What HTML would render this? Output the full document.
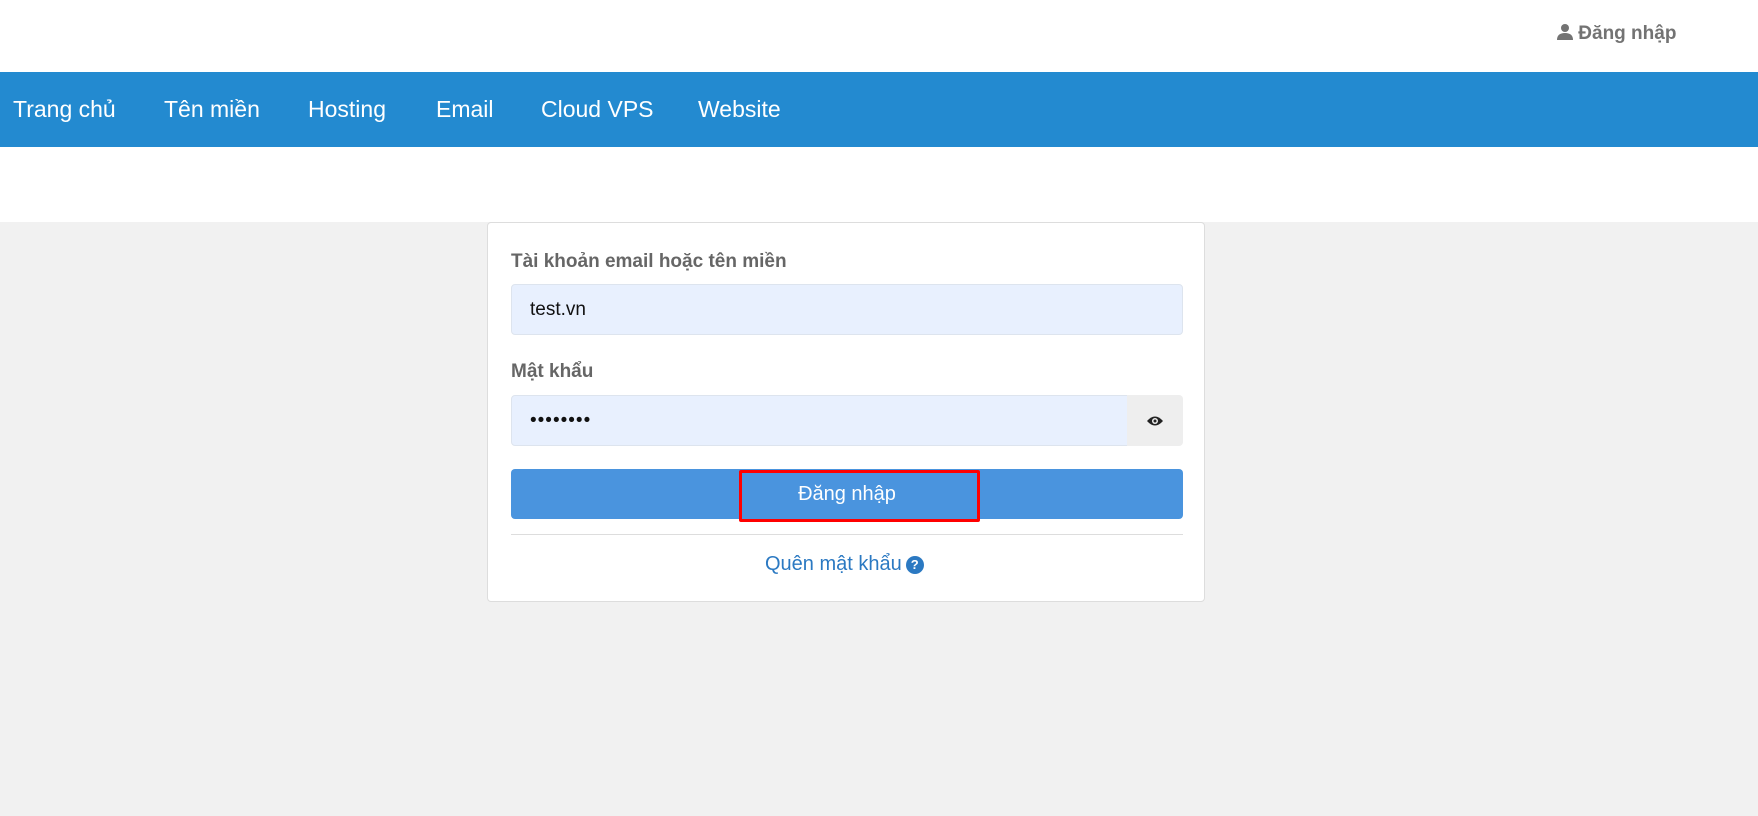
<!DOCTYPE html>
<html><head><meta charset="utf-8"><style>
*{box-sizing:border-box;margin:0;padding:0}
body{width:1758px;height:816px;background:#f1f1f1;font-family:"Liberation Sans",sans-serif;position:relative;overflow:hidden}
.top{position:absolute;left:0;top:0;width:1758px;height:222px;background:#fff}
.nav{position:absolute;left:0;top:72px;width:1758px;height:75px;background:#238ad0}
.nav span{position:absolute;top:24px;color:#fff;font-size:23px}
.login{position:absolute;left:1557px;top:23px;color:#737373;font-weight:bold;font-size:19px}
.card{position:absolute;left:487px;top:222px;width:718px;height:380px;background:#fff;border:1px solid #ddd;border-radius:4px}
.lbl{position:absolute;left:23px;color:#666;font-weight:bold;font-size:19px}
.inp{position:absolute;left:23px;width:672px;height:51px;background:#e8f0fe;border:1px solid #dde4ee;border-radius:4px;font-size:19px;padding:14px 18px;color:#111}
.eye{position:absolute;left:639px;top:172px;width:56px;height:51px;background:#eee;border-radius:0 4px 4px 0}
.btn{position:absolute;left:23px;top:246px;width:672px;height:50px;background:#4a94de;border-radius:4px;color:#fff;font-size:20px;text-align:center;line-height:50px}
.red{position:absolute;left:251px;top:247px;width:241px;height:52px;border:3px solid #f00;border-radius:2px}
.hr{position:absolute;left:23px;top:311px;width:672px;height:1px;background:#ddd}
.link{position:absolute;left:277px;top:330px;color:#2b79c2;font-size:20px}
.q{display:inline-block;width:18px;height:18px;border-radius:50%;background:#2b79c2;color:#fff;font-size:13px;font-weight:bold;text-align:center;line-height:18px;vertical-align:1px;margin-left:4px}
</style></head><body>
<div class="top"></div>
<div class="login"><svg width="16" height="17" viewBox="0 0 16 17" style="vertical-align:-1px"><circle cx="8" cy="5" r="4" fill="#737373"/><path d="M0 17 Q0 10 8 10 Q16 10 16 17Z" fill="#737373"/></svg> Đăng nhập</div>
<div class="nav">
<span style="left:13px">Trang chủ</span><span style="left:164px">Tên miền</span><span style="left:308px">Hosting</span><span style="left:436px">Email</span><span style="left:541px">Cloud VPS</span><span style="left:698px">Website</span>
</div>
<div class="card">
<div class="lbl" style="top:28px">Tài khoản email hoặc tên miền</div>
<div class="inp" style="top:61px">test.vn</div>
<div class="lbl" style="top:138px">Mật khẩu</div>
<div class="inp" style="top:172px;width:620px;border-radius:4px 0 0 4px;letter-spacing:1px">••••••••</div>
<div class="eye"><svg width="18" height="12" viewBox="0 0 18 12" style="position:absolute;left:19px;top:20px"><path d="M1 6 Q9 -3 17 6 Q9 15 1 6Z" fill="#222"/><circle cx="9" cy="6" r="3" fill="#eee"/><circle cx="9" cy="6" r="1.5" fill="#222"/></svg></div>
<div class="btn">Đăng nhập</div>
<div class="red"></div>
<div class="hr"></div>
<div class="link">Quên mật khẩu<span class="q">?</span></div>
</div>
</body></html>
